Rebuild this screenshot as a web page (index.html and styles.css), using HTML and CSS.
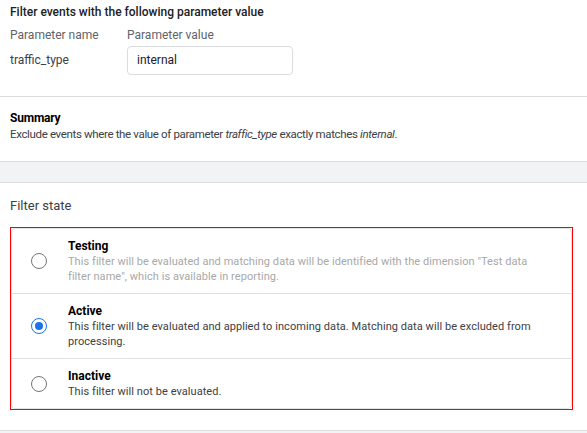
FILE: index.html
```html
<!DOCTYPE html>
<html>
<head>
<meta charset="utf-8">
<link rel="stylesheet" href="styles.css">
</head>
<body>
<section class="params">
  <div class="heading">Filter events with the following parameter value</div>
  <div class="grid">
    <div class="label">Parameter name</div>
    <div class="label">Parameter value</div>
    <div class="name">traffic_type</div>
    <div class="input">internal</div>
  </div>
</section>
<section class="summary">
  <div class="sum-title">Summary</div>
  <div class="sum-text">Exclude events where the value of parameter <i>traffic_type</i> exactly matches <i>internal</i>.</div>
</section>
<div class="band"></div>
<section class="state">
  <div class="state-title">Filter state</div>
  <div class="outline">
    <div class="card">
      <div class="row">
        <span class="radio"></span>
        <div class="row-text">
          <div class="row-title">Testing</div>
          <div class="row-desc disabled">This filter will be evaluated and matching data will be identified with the dimension "Test data filter name", which is available in reporting.</div>
        </div>
      </div>
      <div class="row">
        <span class="radio checked"></span>
        <div class="row-text">
          <div class="row-title">Active</div>
          <div class="row-desc">This filter will be evaluated and applied to incoming data. Matching data will be excluded from processing.</div>
        </div>
      </div>
      <div class="row">
        <span class="radio"></span>
        <div class="row-text">
          <div class="row-title">Inactive</div>
          <div class="row-desc">This filter will not be evaluated.</div>
        </div>
      </div>
    </div>
  </div>
</section>
<div class="band bottom"></div>
</body>
</html>
```
FILE: styles.css
```css
html, body {
  margin: 0;
  padding: 0;
  background: #ffffff;
  font-family: Roboto, "Liberation Sans", sans-serif;
  color: #202124;
}
.params {
  padding: 4px 10px 0 10px;
  height: 92px;
  border-bottom: 1px solid #dadce0;
}
.heading {
  font-size: 12px;
  font-weight: 500;
  line-height: 16px;
  color: #202124;
}
.grid {
  display: grid;
  grid-template-columns: 117px 166px;
  grid-template-rows: 20px 31px;
  margin-top: 4px;
  align-items: center;
}
.label {
  font-size: 12px;
  color: #5f6368;
  line-height: 16px;
  margin-top: 2px;
}
.name {
  font-size: 12px;
  color: #3c4043;
}
.input {
  box-sizing: border-box;
  height: 29px;
  border: 1px solid #dadce0;
  border-radius: 4px;
  padding: 0 9px;
  font-size: 12px;
  line-height: 27px;
  color: #202124;
  align-self: start;
  margin-top: 2px;
}
.summary {
  padding: 13px 10px 0 10px;
  height: 51px;
}
.sum-title {
  font-size: 12px;
  font-weight: 700;
  line-height: 16px;
  color: #000;
  letter-spacing: -0.2px;
}
.sum-text {
  font-size: 11.5px;
  line-height: 16px;
  color: #3c4043;
  letter-spacing: -0.35px;
}
.band {
  height: 20px;
  background: #f1f3f4;
  border-top: 1px solid #dadce0;
  border-bottom: 1px solid #dadce0;
}
.band.bottom {
  height: 10px;
  border-bottom: none;
}
.state {
  padding: 14px 14px 20px 10px;
}
.state-title {
  font-size: 13px;
  line-height: 18px;
  color: #3c4043;
  margin-bottom: 12px;
}
.outline {
  border: 1px solid #ff0000;
}
.card {
  border: 1px solid #e4e4e4;
  border-radius: 4px;
}
.row {
  display: flex;
  align-items: center;
  padding: 9.5px 30px 9.5px 19px;
  border-top: 1px solid #e0e0e0;
}
.row:first-child {
  border-top: none;
}
.radio {
  box-sizing: border-box;
  width: 16px;
  height: 16px;
  border: 1.5px solid #757575;
  border-radius: 50%;
  flex: none;
  margin-right: 21px;
  position: relative;
}
.radio.checked {
  border-color: #1a73e8;
}
.radio.checked::after {
  content: "";
  position: absolute;
  left: 2.5px;
  top: 2.5px;
  width: 8px;
  height: 8px;
  border-radius: 50%;
  background: #1a73e8;
}
.row-text {
  flex: 1;
}
.row-title {
  font-size: 12px;
  font-weight: 700;
  line-height: 15px;
  color: #000;
}
.row-desc {
  font-size: 11px;
  line-height: 15px;
  color: #3c4043;
  letter-spacing: 0.06px;
}
.row-desc.disabled {
  color: #a8a8a8;
}
```
